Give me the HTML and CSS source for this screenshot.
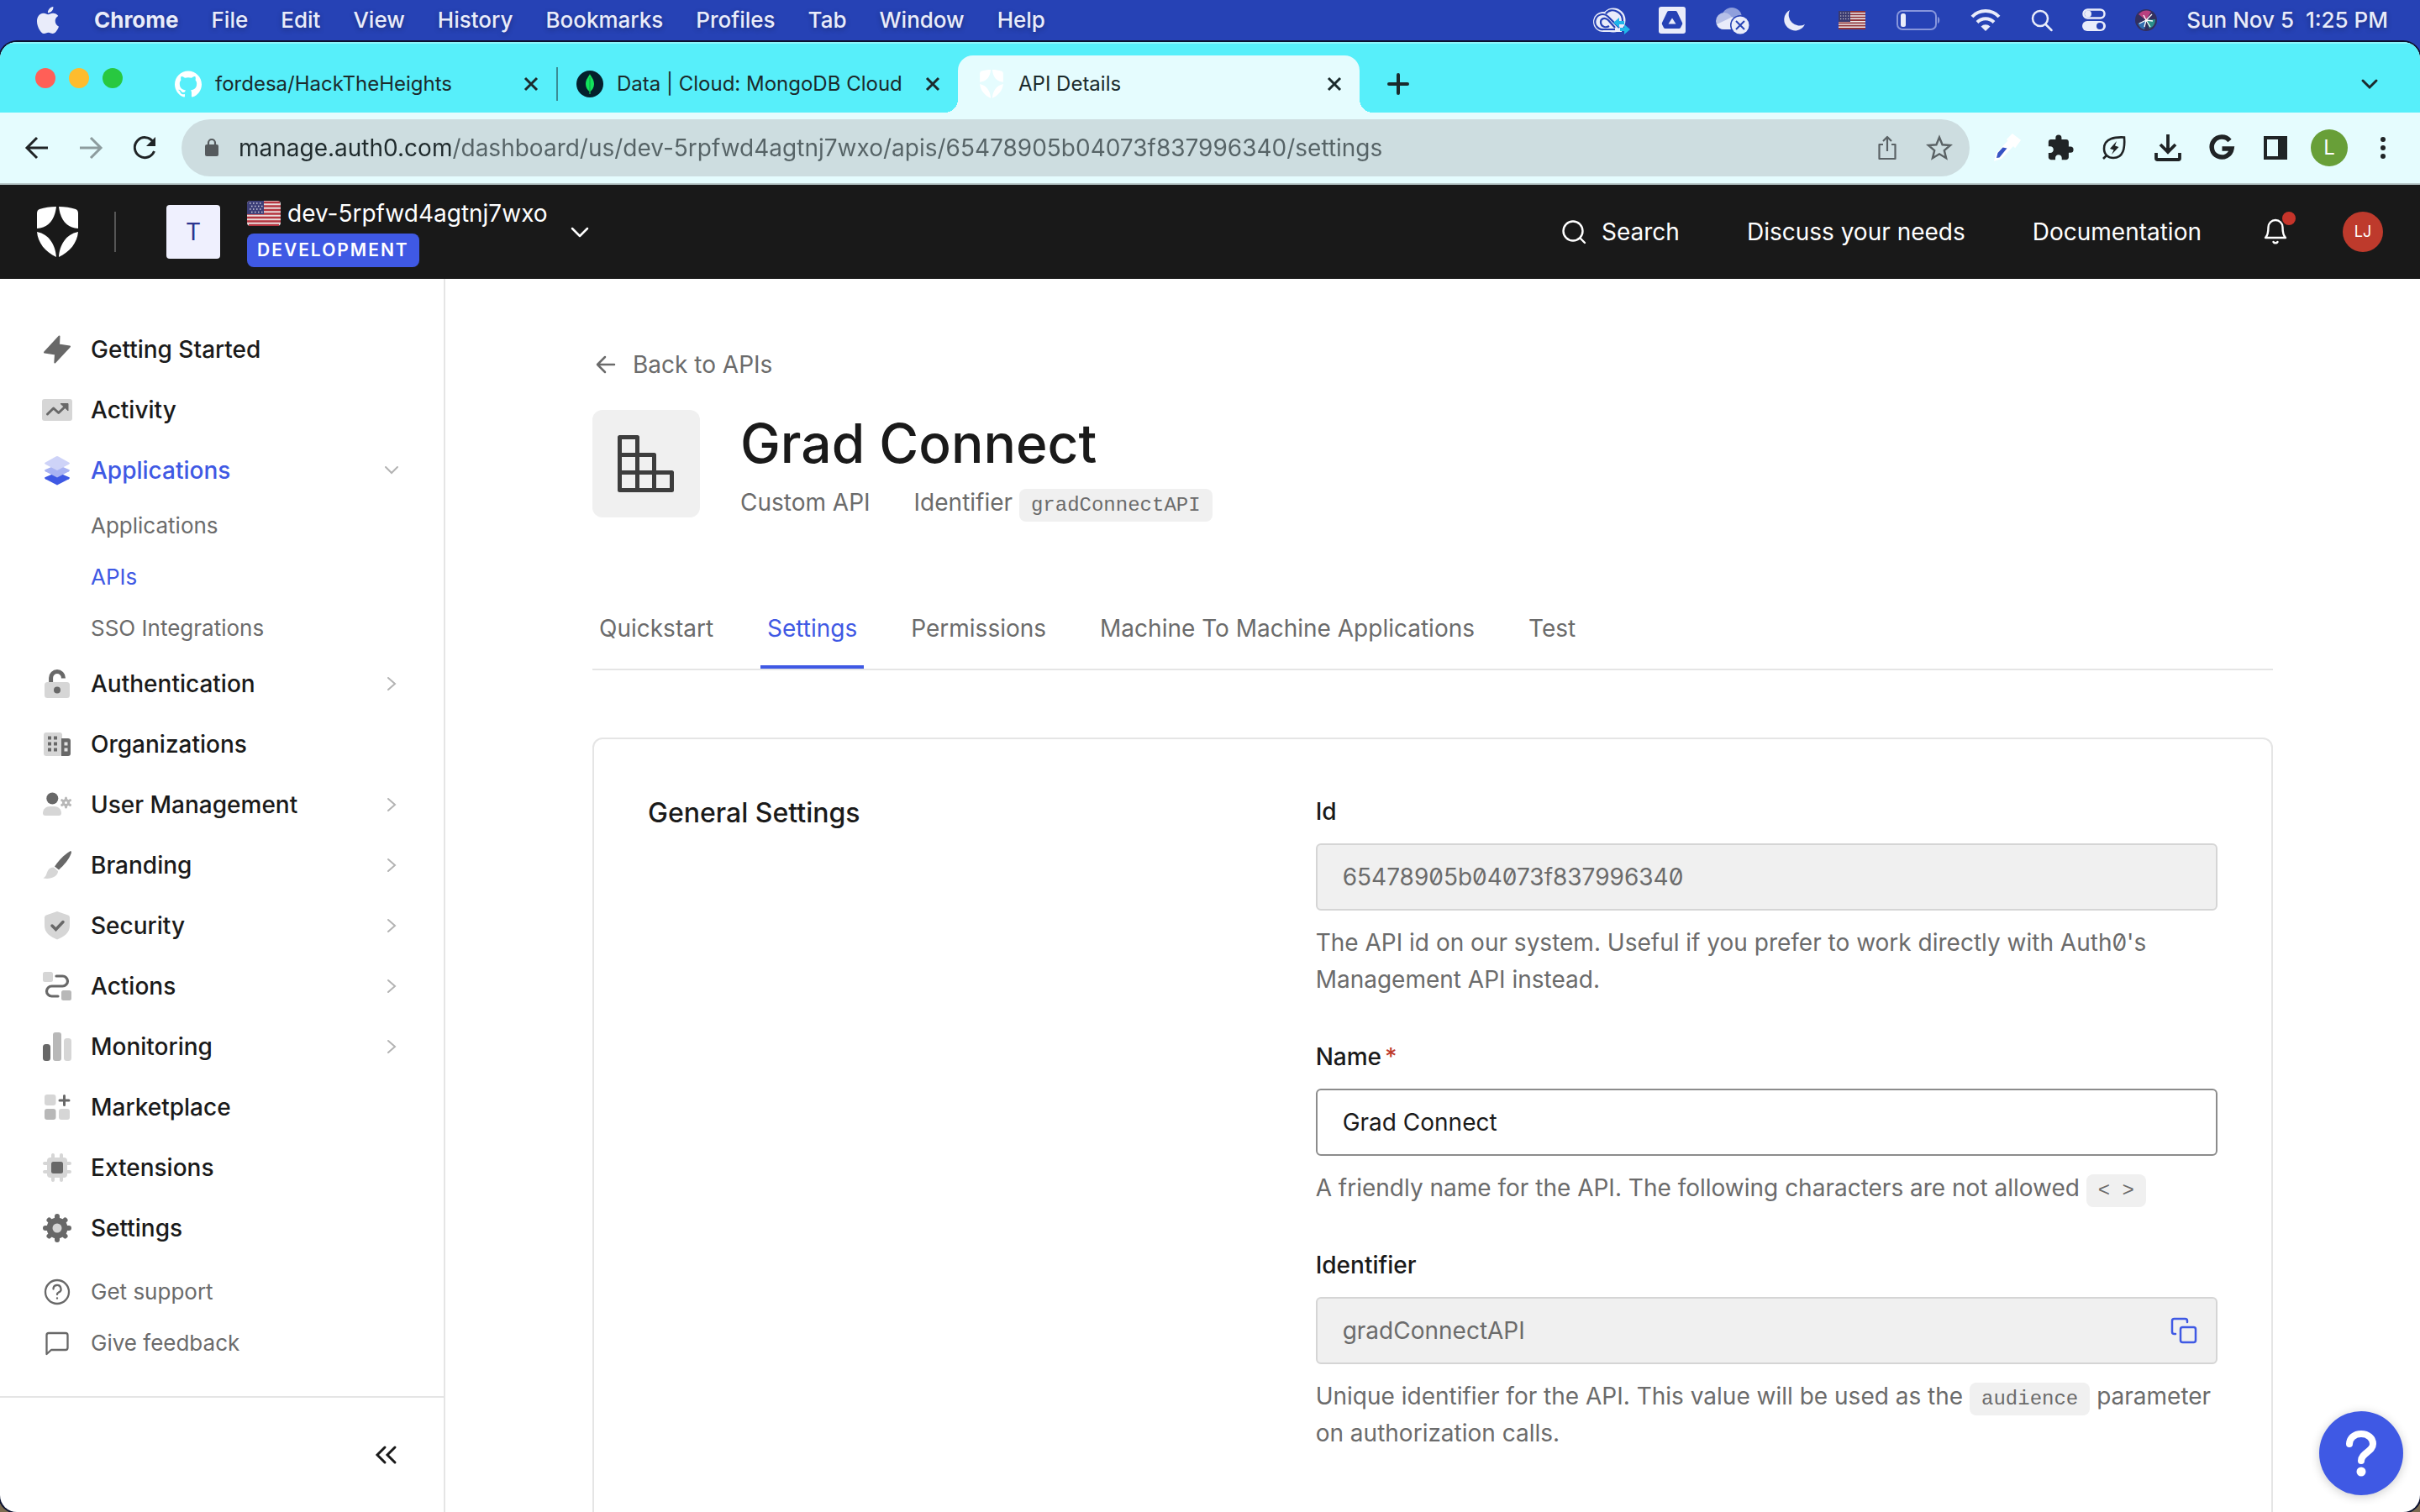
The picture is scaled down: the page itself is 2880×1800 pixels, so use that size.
FILE: index.html
```html
<!DOCTYPE html>
<html lang="en">
<head>
<meta charset="UTF-8">
<meta name="viewport" content="width=device-width, initial-scale=1.0">
<title>API Details</title>
<link rel="stylesheet" href="styles.css">
</head>
<body>

<!-- system menu bar -->
<div class="menubar">
  <div class="menubar-left">
    <svg class="apple" width="32" height="32" viewBox="0 0 24 24" fill="currentColor"><path d="M12.152 6.896c-.948 0-2.415-1.078-3.96-1.04-2.04.027-3.91 1.183-4.961 3.014-2.117 3.675-.546 9.103 1.519 12.09 1.013 1.454 2.208 3.09 3.792 3.039 1.52-.065 2.09-.987 3.935-.987 1.831 0 2.35.987 3.96.948 1.637-.026 2.676-1.48 3.676-2.948 1.156-1.688 1.636-3.325 1.662-3.415-.039-.013-3.182-1.221-3.22-4.857-.026-3.04 2.48-4.494 2.597-4.559-1.429-2.09-3.623-2.324-4.39-2.376-2-.156-3.675 1.09-4.61 1.09zM15.53 3.83c.843-1.012 1.4-2.427 1.245-3.83-1.207.052-2.662.805-3.532 1.818-.78.896-1.454 2.338-1.273 3.714 1.338.104 2.715-.688 3.559-1.701"/></svg>
    <span class="app-name">Chrome</span>
    <span>File</span>
    <span>Edit</span>
    <span>View</span>
    <span>History</span>
    <span>Bookmarks</span>
    <span>Profiles</span>
    <span>Tab</span>
    <span>Window</span>
    <span>Help</span>
  </div>
  <div class="menubar-right">
    <svg width="44" height="34" viewBox="0 0 44 34"><circle cx="24" cy="17" r="14.500" fill="currentColor"/><circle cx="12" cy="19" r="12" fill="currentColor"/><path d="M12 19h22v12H12z" fill="currentColor"/><g fill="none" stroke="#2642b5" stroke-width="2.200"><path d="M15 9.500C18 5 24 4 29 7c4 2 6 6 6 11"/><path d="M26 28H12a9 9 0 1 1 5.500-15.500L31 26"/><path d="M19 24c-3 2-9 2-10-4-.5-5 5-7 9-3l8 9"/></g><path d="M24 20l7-6v4h6v4h-6v4z" fill="#1fb6ea"/><path d="M44 28l-7-6v4h-5v4h5v4z" fill="#1fb6ea"/></svg>
    <svg width="32" height="32" viewBox="0 0 32 32"><rect width="32" height="32" rx="3" fill="currentColor"/><path d="M12 5h8q1.200 0 1.800 1L28 19q.5 1 0 2l-2 4q-.6 1-1.800 1H7.800Q6.600 26 6 25l-2-4q-.5-1 0-2l6.200-13Q10.800 5 12 5z" fill="#2642b5"/><path d="M16 13.500l4.500 7h-9z" fill="currentColor"/></svg>
    <svg width="44" height="34" viewBox="0 0 44 34"><circle cx="21" cy="14" r="12" fill="#8f9fdc"/><circle cx="12" cy="18" r="10" fill="#b6c0e7"/><path d="M3 22l19-9 6 15H12q-7 0-9-6z" fill="currentColor"/><circle cx="31" cy="23" r="12" fill="#2642b5"/><circle cx="31" cy="23" r="10.500" fill="currentColor"/><path d="M26 18l10 10M36 18L26 28" stroke="#2642b5" stroke-width="2"/></svg>
    <svg width="34" height="30" viewBox="0 0 34 30"><path d="M12 3a13 13 0 1 0 18 17A13 13 0 0 1 12 3z" fill="currentColor"/></svg>
    <svg width="36" height="24" viewBox="0 0 36 24"><rect x="2" y="1" width="32" height="22" fill="#eee"/><path d="M2 2h32M2 5.300h32M2 8.700h32M2 12h32M2 15.300h32M2 18.700h32M2 22h32" stroke="#8f3238" stroke-width="1.800"/><rect x="2" y="1" width="14" height="13" fill="#3a3a70"/><path d="M4 3.500h11M4 7h11M4 10.500h11" stroke="#ddd" stroke-width="1.200" stroke-dasharray="1.300 1.700"/></svg>
    <svg width="54" height="26" viewBox="0 0 54 26" fill="none"><rect x="2" y="2" width="46" height="22" rx="6" stroke="#8796dc" stroke-width="2"/><rect x="6" y="5" width="6" height="16" rx="2.500" fill="currentColor"/><path d="M50 9c3 1 3 7 0 8z" fill="#8796dc"/></svg>
    <svg width="38" height="28" viewBox="0 0 38 28" fill="none" stroke="currentColor" stroke-width="4"><path d="M3 10a22 22 0 0 1 32 0M9 16.500a14 14 0 0 1 20 0"/><path d="M13.500 21.500a8 8 0 0 1 11 0L19 27z" fill="currentColor" stroke="none"/></svg>
    <svg width="28" height="28" viewBox="0 0 28 28" fill="none" stroke="currentColor" stroke-width="2.500"><circle cx="12" cy="12" r="9"/><path d="M18.500 19l7 7" stroke-linecap="round"/></svg>
    <svg width="28" height="28" viewBox="0 0 28 28"><rect x="1.500" y="1.500" width="25" height="10" rx="5" fill="none" stroke="currentColor" stroke-width="2.500"/><circle cx="7" cy="6.500" r="4" fill="currentColor"/><rect y="15" width="28" height="12" rx="6" fill="currentColor"/><circle cx="21" cy="21" r="4" fill="#2642b5"/></svg>
    <svg width="28" height="28" viewBox="0 0 28 28"><circle cx="14" cy="14" r="13" fill="#32305e"/><path d="M14 14L5 7q7-7 15-3z" fill="#b8407f"/><path d="M14 14l-10 4q3 6 8 7z" fill="#2f6fb0"/><path d="M14 14l11-1q0 8-7 11z" fill="#2a8f8a"/><path d="M14 14l-8 4M14 14l7-7M14 14l5 8M14 14l-2 8M14 14l-3-6M14 14l8 1" stroke="#fff" stroke-width="1.300"/></svg>
    <span class="clock">Sun Nov 5&nbsp; 1:25 PM</span>
  </div>
</div>

<div class="window">

  <!-- browser tabs -->
  <div class="tabstrip">
    <div class="lights">
      <span class="light red"></span>
      <span class="light yellow"></span>
      <span class="light green"></span>
    </div>
    <div class="tab">
      <svg width="32" height="32" viewBox="0 0 24 24" fill="#fff"><path d="M12 .297c-6.630 0-12 5.373-12 12 0 5.303 3.438 9.800 8.205 11.385.6.113.82-.258.82-.577 0-.285-.01-1.040-.015-2.040-3.338.724-4.042-1.610-4.042-1.610C4.422 18.070 3.633 17.700 3.633 17.700c-1.087-.744.084-.729.084-.729 1.205.084 1.838 1.236 1.838 1.236 1.070 1.835 2.809 1.305 3.495.998.108-.776.417-1.305.76-1.605-2.665-.3-5.466-1.332-5.466-5.930 0-1.310.465-2.380 1.235-3.220-.135-.303-.54-1.523.105-3.176 0 0 1.005-.322 3.300 1.230.96-.267 1.980-.399 3-.405 1.020.006 2.040.138 3 .405 2.280-1.552 3.285-1.230 3.285-1.230.645 1.653.24 2.873.12 3.176.765.84 1.230 1.910 1.230 3.220 0 4.610-2.805 5.625-5.475 5.920.42.36.81 1.096.81 2.220 0 1.606-.015 2.896-.015 3.286 0 .315.21.69.825.57C20.565 22.092 24 17.592 24 12.297c0-6.627-5.373-12-12-12"/></svg>
      <span class="tab-title">fordesa/HackTheHeights</span>
      <button class="tab-close" aria-label="Close tab"><svg width="20" height="20" viewBox="0 0 20 20"><path d="M3 3l14 14M17 3L3 17"/></svg></button>
    </div>
    <div class="tab divided">
      <svg width="32" height="32" viewBox="0 0 32 32"><circle cx="16" cy="16" r="16" fill="#04202c"/><path d="M16 4c1 3 5 6 5 12 0 4-2 7-4.500 9V28h-1v-3C13 23 11 20 11 16c0-6 4-9 5-12z" fill="#12e35c"/><path d="M16 8v17" stroke="#0aa345" stroke-width="1"/></svg>
      <span class="tab-title">Data | Cloud: MongoDB Cloud</span>
      <button class="tab-close" aria-label="Close tab"><svg width="20" height="20" viewBox="0 0 20 20"><path d="M3 3l14 14M17 3L3 17"/></svg></button>
    </div>
    <div class="tab active">
      <svg width="32" height="34" viewBox="-3 0 55 60" fill="#fff"><path d="M23 0C16 0 9 1 3 3Q0 4 0 8V26C13 25 21 17 23 0zM26 0C33 0 40 1 46 3Q49 4 49 8V26C36 25 28 17 26 0zM0 30C1 43 10 54 23 60 22 46 15 33 0 30zM49 30C48 43 39 54 26 60 27 46 34 33 49 30z"/></svg>
      <span class="tab-title">API Details</span>
      <button class="tab-close" aria-label="Close tab"><svg width="20" height="20" viewBox="0 0 20 20"><path d="M3 3l14 14M17 3L3 17"/></svg></button>
    </div>
    <button class="strip-btn new-tab" aria-label="New tab"><svg width="28" height="28" viewBox="0 0 28 28"><path d="M14 3v22M3 14h22" stroke-width="4"/></svg></button>
    <button class="strip-btn tab-search" aria-label="Search tabs"><svg width="28" height="28" viewBox="0 0 28 28"><path d="M6 10l8 8 8-8" stroke-width="3"/></svg></button>
  </div>

  <!-- address bar -->
  <div class="toolbar">
    <div class="toolbar-group">
      <button class="tool" aria-label="Back"><svg width="32" height="32" viewBox="0 0 32 32"><path d="M29 16H4M16 4L4 16l12 12"/></svg></button>
      <button class="tool disabled" aria-label="Forward"><svg width="32" height="32" viewBox="0 0 32 32"><path d="M3 16h25M16 4l12 12-12 12"/></svg></button>
      <button class="tool" aria-label="Reload"><svg width="32" height="32" viewBox="0 0 32 32"><path d="M26 8.500A12 12 0 1 0 27.500 20"/><path d="M29 3v11H18z" fill="currentColor" stroke="none"/></svg></button>
    </div>
    <div class="omnibox">
      <svg class="lock" width="28" height="24" viewBox="0 0 28 24"><rect x="6" y="8" width="16" height="14" rx="2" fill="#555a5d"/><path d="M10 9V6a4 4 0 0 1 8 0v3" fill="none" stroke="#555a5d" stroke-width="2.200"/></svg>
      <input class="url" type="text" aria-label="Address" value="manage.auth0.com/dashboard/us/dev-5rpfwd4agtnj7wxo/apis/65478905b04073f837996340/settings">
      <button class="tool muted" aria-label="Share"><svg width="32" height="32" viewBox="0 0 32 32"><path d="M11 12H6.500v17h19V12H21M16 20V3M11 8l5-5 5 5" stroke-width="2.200" stroke-linejoin="round"/></svg></button>
      <button class="tool muted" aria-label="Bookmark"><svg width="32" height="32" viewBox="0 0 32 32"><path d="M16 3.500l3.600 8.800 9.400.7-7.200 6.100 2.300 9.200L16 23.300l-8.100 5 2.300-9.200L3 13l9.400-.7z" stroke-width="2.400"/></svg></button>
    </div>
    <div class="toolbar-group">
      <button class="tool" aria-label="Color picker"><svg width="36" height="36" viewBox="0 0 36 36"><path d="M3 34l2-9L20 9l7 6-15 16z" fill="#fff" stroke="none"/><path d="M20 8l5-5 8 6-5 7z" fill="#fff" stroke="#fff"/><path d="M6 30l1.500-6 6-6.500 5 1-9 11z" fill="#3653c4" stroke="none"/></svg></button>
      <button class="tool" aria-label="Extensions"><svg width="34" height="34" viewBox="0 0 24 24"><path d="M20.500 11H19V7c0-1.100-.9-2-2-2h-4V3.500a2.500 2.500 0 0 0-5 0V5H4c-1.100 0-1.990.9-1.990 2v3.800H3.500c1.490 0 2.700 1.210 2.700 2.700s-1.210 2.700-2.700 2.700H2V20c0 1.100.9 2 2 2h3.800v-1.500c0-1.490 1.210-2.700 2.700-2.700 1.490 0 2.700 1.210 2.700 2.700V22H17c1.100 0 2-.9 2-2v-4h1.500a2.500 2.500 0 0 0 0-5z" fill="currentColor" stroke="none"/></svg></button>
      <button class="tool" aria-label="Energy saver"><svg width="32" height="32" viewBox="0 0 32 32"><path d="M28 3.500C18 3 4 4 4 17c0 7 5 11 11 11 12 0 14-12 13-24.500zM7 25l-4 4" stroke-width="2.600"/><path d="M19 8l-8 9 4.500 1.500L13 24l8.500-9-4.500-1.500z" fill="currentColor" stroke="none"/></svg></button>
      <button class="tool" aria-label="Downloads"><svg width="34" height="34" viewBox="0 0 34 34"><path d="M17 1v21M8 13l9 9 9-9M3 23v6.500q0 1.500 1.500 1.500h25q1.500 0 1.500-1.500V23" stroke-width="3.800"/></svg></button>
      <button class="tool" aria-label="Google"><svg width="34" height="34" viewBox="0 0 34 34"><path d="M26.500 8.500A12 12 0 1 0 29 18H17.500" stroke-width="5.500"/></svg></button>
      <button class="tool" aria-label="Side panel"><svg width="32" height="32" viewBox="0 0 32 32"><rect x="4" y="4" width="24" height="24" stroke-width="4"/><path d="M19 3h10v26H19z" fill="currentColor" stroke="none"/></svg></button>
      <button class="profile" aria-label="Profile">L</button>
      <button class="tool" aria-label="Menu"><svg width="32" height="32" viewBox="0 0 32 32"><g fill="currentColor" stroke="none"><circle cx="16" cy="6" r="3"/><circle cx="16" cy="16" r="3"/><circle cx="16" cy="26" r="3"/></g></svg></button>
    </div>
  </div>

  <!-- dashboard header -->
  <header class="header">
    <a class="logo" href="#" aria-label="Home"><svg width="49" height="60" viewBox="0 0 49 60" fill="#fff"><path d="M23 0C16 0 9 1 3 3Q0 4 0 8V26C13 25 21 17 23 0zM26 0C33 0 40 1 46 3Q49 4 49 8V26C36 25 28 17 26 0zM0 30C1 43 10 54 23 60 22 46 15 33 0 30zM49 30C48 43 39 54 26 60 27 46 34 33 49 30z"/></svg></a>
    <button class="tenant">
      <span class="tenant-letter">T</span>
      <span class="tenant-info">
        <span class="tenant-name">
          <svg width="40" height="30" viewBox="0 0 40 30"><rect width="40" height="30" rx="4" fill="#e8dcdc"/><path d="M1 2h38M0 6.500h40M0 11h40M0 15.500h40M0 20h40M0 24.500h40M2 29h36" stroke="#b5343f" stroke-width="2.300"/><path d="M4 0h16v16H0V4q0-4 4-4z" fill="#3d3f78"/><path d="M3 3h16M5 6.500h14M3 10h16M5 13.500h14" stroke="#ccd" stroke-width="1.500" stroke-dasharray="1.500 2.500"/></svg>
          dev-5rpfwd4agtnj7wxo
        </span>
        <span class="env">DEVELOPMENT</span>
      </span>
      <svg width="24" height="24" viewBox="0 0 24 24" fill="none" stroke="#fff" stroke-width="2.500" stroke-linecap="round" stroke-linejoin="round"><path d="M3 8l9 9 9-9"/></svg>
    </button>
    <nav class="header-links">
      <a href="#"><svg width="30" height="30" viewBox="0 0 30 30" fill="none" stroke="#fff" stroke-width="2.400" stroke-linecap="round"><circle cx="14" cy="14" r="11.500"/><path d="M22.500 22.500L28 28"/></svg>Search</a>
      <a href="#">Discuss your needs</a>
      <a href="#">Documentation</a>
    </nav>
    <button class="bell" aria-label="Notifications">
      <svg width="36" height="36" viewBox="0 0 36 36" fill="none" stroke="#fff" stroke-width="2.400" stroke-linecap="round" stroke-linejoin="round"><path d="M18 4a8.500 8.500 0 0 0-8.500 8.500c0 8-1.500 10.500-3.500 12.500h24c-2-2-3.500-4.500-3.500-12.500A8.500 8.500 0 0 0 18 4zM15.500 30a3 3 0 0 0 5 0"/></svg>
      <span class="bell-dot"></span>
    </button>
    <button class="avatar" aria-label="Account">LJ</button>
  </header>

  <div class="page">
    <aside class="sidebar">
      <nav class="nav">
        <a class="nav-item" href="#"><svg width="36" height="36" viewBox="0 0 36 36"><path d="M20.500 2.500L3 21.500l13 2-.7 10L33 14.500l-13-2z" fill="#686868" stroke="#686868" stroke-width="2" stroke-linejoin="round"/></svg>Getting Started</a>
        <a class="nav-item" href="#"><svg width="36" height="36" viewBox="0 0 36 36"><rect y="5" width="36" height="26" rx="3" fill="#d6d6d6"/><path d="M6.500 23l7.200-7 6 5.500L27.500 14" fill="none" stroke="#686868" stroke-width="3" stroke-linejoin="round" stroke-linecap="round"/><path d="M22 10.500h9V19z" fill="#686868" stroke="#686868" stroke-linejoin="round"/></svg>Activity</a>
        <a class="nav-item current" href="#"><svg width="36" height="36" viewBox="0 0 36 36"><path d="M4 26l14-6 14 6q2 1 0 2.200L18 35.500 4 28.200Q2 27 4 26z" fill="#3f59e4"/><path d="M4 17l14-6 14 6q2 1 0 2.200L18 26.500 4 19.200Q2 18 4 17z" fill="#a9b3f3"/><path d="M4 8.500L16.500 1.500q1.500-.8 3 0L32 8.500q2 1 0 2.200L18 18 4 10.700Q2 9.500 4 8.500z" fill="#ced3f8"/></svg>Applications<svg class="chev" width="24" height="24" viewBox="0 0 24 24"><path d="M5 8l7 7 7-7"/></svg></a>
        <div class="subnav">
          <a href="#">Applications</a>
          <a class="current" href="#">APIs</a>
          <a href="#">SSO Integrations</a>
        </div>
        <a class="nav-item" href="#"><svg width="36" height="36" viewBox="0 0 36 36"><rect x="3" y="16" width="30" height="19" rx="3.500" fill="#d6d6d6"/><circle cx="18" cy="25.500" r="4" fill="#686868"/><path d="M10.600 16v-5a7.400 7.400 0 0 1 14.800 0v.5" fill="none" stroke="#686868" stroke-width="5"/></svg>Authentication<svg class="chev" width="24" height="24" viewBox="0 0 24 24"><path d="M8 5l8 7-8 7"/></svg></a>
        <a class="nav-item" href="#"><svg width="36" height="36" viewBox="0 0 36 36"><rect x="2" y="4" width="22" height="28" rx="3" fill="#d6d6d6"/><path d="M23 11h8q3 0 3 3v15q0 3-3 3h-8z" fill="#686868"/><path d="M9 8.500v18M16 8.500v18" stroke="#686868" stroke-width="4" stroke-dasharray="4 3"/><path d="M28.500 15.500v11" stroke="#e2e2e2" stroke-width="4" stroke-dasharray="4 3"/></svg>Organizations</a>
        <a class="nav-item" href="#"><svg width="36" height="36" viewBox="0 0 36 36"><circle cx="12.300" cy="10.500" r="7" fill="#686868"/><path d="M1 28c0-5 4-8 8-8h6c4 0 8 3 8 8q0 3-3 3H4q-3 0-3-3z" fill="#d6d6d6"/><g stroke="#b8b8b8" stroke-width="3" stroke-linecap="round" fill="none"><circle cx="28.500" cy="15.500" r="3"/><path d="M28.500 10v1M28.500 20v1M23.700 12.700l1 .6M32.500 17.800l1 .6M23.700 18.400l1-.6M32.500 13.300l1-.6"/></g></svg>User Management<svg class="chev" width="24" height="24" viewBox="0 0 24 24"><path d="M8 5l8 7-8 7"/></svg></a>
        <a class="nav-item" href="#"><svg width="36" height="36" viewBox="0 0 36 36"><path d="M34 1q1.500.5.500 3.500C32 11 26 18 20 23.500L15 19.500C20 12 27 5 34 1z" fill="#686868"/><path d="M14 20.500l5 4.500c0 7-9 10-17.500 8.500C5.500 31 5 28 7 24.500c1.500-3 4-4 7-4z" fill="#d6d6d6"/></svg>Branding<svg class="chev" width="24" height="24" viewBox="0 0 24 24"><path d="M8 5l8 7-8 7"/></svg></a>
        <a class="nav-item" href="#"><svg width="36" height="36" viewBox="0 0 36 36"><path d="M18 1l13 4.500q2 .7 2 3V18c0 8-6 13-15 16.500C9 31 3 26 3 18V8.500q0-2.300 2-3z" fill="#d6d6d6"/><path d="M12 18l4.500 4.500L25 13.500" fill="none" stroke="#686868" stroke-width="3.500" stroke-linecap="round"/></svg>Security<svg class="chev" width="24" height="24" viewBox="0 0 24 24"><path d="M8 5l8 7-8 7"/></svg></a>
        <a class="nav-item" href="#"><svg width="36" height="36" viewBox="0 0 36 36"><rect x="1" y="1" width="12" height="12" rx="2.500" fill="#d6d6d6"/><rect x="23" y="23" width="12" height="12" rx="2.500" fill="#b8b8b8"/><path d="M17 6h7.500a6 6 0 0 1 0 12H11.500a6 6 0 0 0 0 12H19" fill="none" stroke="#686868" stroke-width="3.200" stroke-linecap="round"/></svg>Actions<svg class="chev" width="24" height="24" viewBox="0 0 24 24"><path d="M8 5l8 7-8 7"/></svg></a>
        <a class="nav-item" href="#"><svg width="36" height="36" viewBox="0 0 36 36"><rect x="1" y="15" width="9" height="20" rx="3.500" fill="#686868"/><rect x="13" y="1" width="10" height="34" rx="3" fill="#b8b8b8"/><rect x="26" y="8" width="9" height="27" rx="3.500" fill="#d6d6d6"/></svg>Monitoring<svg class="chev" width="24" height="24" viewBox="0 0 24 24"><path d="M8 5l8 7-8 7"/></svg></a>
        <a class="nav-item" href="#"><svg width="36" height="36" viewBox="0 0 36 36"><rect x="3" y="3" width="13.500" height="13" rx="3" fill="#d6d6d6"/><rect x="3" y="20" width="13.500" height="13" rx="3" fill="#b8b8b8"/><rect x="20" y="20" width="13" height="13" rx="3" fill="#d6d6d6"/><path d="M26.500 4.500v11M21 10h11" stroke="#686868" stroke-width="3" stroke-linecap="round"/></svg>Marketplace</a>
        <a class="nav-item" href="#"><svg width="36" height="36" viewBox="0 0 36 36"><rect x="6" y="6" width="24" height="24" rx="4" fill="#d6d6d6"/><path d="M13 3v30M23 3v30M3 13h30M3 23h30" stroke="#d6d6d6" stroke-width="4" stroke-linecap="round"/><rect x="11" y="11" width="14" height="14" rx="2.500" fill="#686868"/></svg>Extensions</a>
        <a class="nav-item" href="#"><svg width="36" height="36" viewBox="0 0 36 36"><circle cx="18" cy="18" r="12.500" fill="#686868"/><path d="M18 4v28M4 18h28M8.500 8.500l19 19M27.500 8.500l-19 19" stroke="#686868" stroke-width="6" stroke-linecap="round"/><circle cx="18" cy="18" r="5.500" fill="#d6d6d6"/></svg>Settings</a>
        <div class="nav-extra">
          <a href="#"><svg width="36" height="36" viewBox="0 0 36 36" fill="none" stroke="#686868" stroke-width="2.300" stroke-linecap="round"><circle cx="18" cy="18" r="14"/><path d="M13.500 14.500a4.500 4.500 0 1 1 6 4.200q-1.500.6-1.500 2.300M18 25.500v.2"/></svg>Get support</a>
          <a href="#"><svg width="36" height="36" viewBox="0 0 36 36" fill="none" stroke="#686868" stroke-width="2.300" stroke-linejoin="round"><path d="M8 6h20q2.500 0 2.500 2.500v15q0 2.500-2.500 2.500H11l-5.500 5V8.500Q5.500 6 8 6z"/></svg>Give feedback</a>
        </div>
      </nav>
      <div class="sidebar-footer">
        <button class="collapse" aria-label="Collapse sidebar"><svg width="28" height="28" viewBox="0 0 28 28"><path d="M12 5l-9 9 9 9M24 5l-9 9 9 9"/></svg></button>
      </div>
    </aside>

    <main class="main">
      <div class="content">
        <a class="back" href="#"><svg width="32" height="32" viewBox="0 0 32 32"><path d="M26 16H6M15 7l-9 9 9 9"/></svg>Back to APIs</a>

        <div class="api-header">
          <div class="api-icon"><svg width="72" height="72" viewBox="0 0 72 72" fill="none" stroke="#3d3d3d" stroke-width="5" stroke-linejoin="round"><path d="M4.500 4.500h21v63h-21zM25.500 25.500h20v42M4.500 25.500h21M4.500 46.500h62v21h-62z"/></svg></div>
          <div>
            <h1>Grad Connect</h1>
            <div class="api-meta">
              <span>Custom API</span>
              <span>Identifier <code>gradConnectAPI</code></span>
            </div>
          </div>
        </div>

        <nav class="tabs">
          <a href="#">Quickstart</a>
          <a class="current" href="#">Settings</a>
          <a href="#">Permissions</a>
          <a href="#">Machine To Machine Applications</a>
          <a href="#">Test</a>
        </nav>

        <section class="card">
          <h2>General Settings</h2>
          <form class="fields">
            <div class="field">
              <label for="api-id">Id</label>
              <input id="api-id" type="text" value="65478905b04073f837996340" disabled>
              <p>The API id on our system. Useful if you prefer to work directly with Auth0's Management API instead.</p>
            </div>
            <div class="field">
              <label for="api-name">Name<span class="required">*</span></label>
              <input id="api-name" type="text" value="Grad Connect">
              <p>A friendly name for the API. The following characters are not allowed <code>&lt; &gt;</code></p>
            </div>
            <div class="field">
              <label for="api-identifier">Identifier</label>
              <div class="input-wrap">
                <input id="api-identifier" type="text" value="gradConnectAPI" disabled>
                <button class="copy" type="button" aria-label="Copy"><svg width="32" height="32" viewBox="0 0 32 32"><rect x="12" y="12" width="18" height="18" rx="2.500"/><path d="M6 20H4.500Q2 20 2 17.500v-13Q2 2 4.500 2h13Q20 2 20 4.500V6"/></svg></button>
              </div>
              <p>Unique identifier for the API. This value will be used as the <code>audience</code> parameter on authorization calls.</p>
            </div>
          </form>
        </section>
      </div>
    </main>
  </div>

  <button class="help" aria-label="Help"><svg width="60" height="60" viewBox="0 0 60 60"><path d="M16 19c0-7 6-12 14-12s14 5 14 12c0 9-14 11-14 20" fill="none" stroke="#fff" stroke-width="8" stroke-linecap="round"/><circle cx="30" cy="52" r="5.500" fill="#fff"/></svg></button>
</div>

</body>
</html>
```
FILE: styles.css
```css
* {
  box-sizing: border-box;
}
body {
  margin: 0;
  height: 100vh;
  display: flex;
  flex-direction: column;
  overflow: hidden;
  background: linear-gradient(#2642b5 50%, #7b6b50 50%);
  font-family: Inter, "Liberation Sans", sans-serif;
  font-size: 28px;
  line-height: 44px;
  color: #1a1a1a;
}
a {
  color: inherit;
  text-decoration: none;
}
button {
  display: flex;
  align-items: center;
  justify-content: center;
  padding: 0;
  border: 0;
  background: none;
  font: inherit;
  color: inherit;
}
svg {
  flex: none;
  display: block;
}

/* menu bar */
.menubar {
  flex: none;
  display: flex;
  align-items: center;
  justify-content: space-between;
  height: 48px;
  padding: 0 38px 0 41px;
  background: #2642b5;
  color: #e9ecfa;
  font-size: 26px;
  font-weight: 500;
  white-space: nowrap;
  text-shadow: 0 2px 6px rgba(0, 0, 0, 0.3);
}
.menubar-left {
  display: flex;
  align-items: center;
  gap: 39px;
}
.menubar-right {
  display: flex;
  align-items: center;
  gap: 34px;
}
.app-name {
  font-weight: 700;
}

/* browser window */
.window {
  flex: 1;
  min-height: 0;
  display: flex;
  flex-direction: column;
  position: relative;
  margin-top: 2px;
  border-radius: 20px;
  overflow: hidden;
  background: #fff;
  box-shadow: 0 0 0 2px #0b1230;
}
.tabstrip {
  flex: none;
  display: flex;
  align-items: center;
  height: 84px;
  padding: 14px 36px 0 42px;
  background: #57effa;
  border-top: 2px solid #8df5fc;
  color: #1b2a2c;
  font-size: 24px;
}
.lights {
  display: flex;
  gap: 16px;
  margin-right: 38px;
  padding-bottom: 14px;
}
.light {
  width: 24px;
  height: 24px;
  border-radius: 50%;
}
.red {
  background: #ff5f57;
}
.yellow {
  background: #febc2e;
}
.green {
  background: #28c840;
}
.tab {
  position: relative;
  display: flex;
  align-items: center;
  gap: 16px;
  width: 478px;
  height: 100%;
  padding: 0 20px 0 24px;
}
.tab-title {
  flex: 1;
  white-space: nowrap;
}
.tab-close svg {
  fill: none;
  stroke: #1b2a2c;
  stroke-width: 3;
}
.divided::before {
  content: "";
  position: absolute;
  left: 0;
  top: 14px;
  width: 2px;
  height: 40px;
  background: #3a8c95;
}
.active {
  border-radius: 18px 18px 0 0;
  background: #e5fcfe;
}
/* flared feet of the active tab */
.active::before,
.active::after {
  content: "";
  position: absolute;
  bottom: 0;
  width: 16px;
  height: 16px;
}
.active::before {
  left: -16px;
  background: radial-gradient(circle at 0 0, #57effa 16px, #e5fcfe 16px);
}
.active::after {
  right: -16px;
  background: radial-gradient(circle at 100% 0, #57effa 16px, #e5fcfe 16px);
}
.strip-btn svg {
  fill: none;
  stroke: #1b2a2c;
  stroke-linecap: round;
}
.new-tab {
  margin-left: 32px;
}
.tab-search {
  margin-left: auto;
  margin-right: 10px;
}

.toolbar {
  flex: none;
  display: flex;
  align-items: center;
  gap: 22px;
  height: 86px;
  padding: 0 22px;
  background: #e5fcfe;
  border-bottom: 2px solid #b9c9ca;
}
.toolbar-group {
  display: flex;
  align-items: center;
  gap: 20px;
}
.tool {
  width: 44px;
  height: 44px;
  color: #202426;
}
.tool svg {
  fill: none;
  stroke: currentColor;
  stroke-width: 3;
}
.disabled {
  color: #8d9c9e;
}
.muted {
  color: #5a6265;
}
.omnibox {
  flex: 1;
  display: flex;
  align-items: center;
  gap: 18px;
  height: 68px;
  padding: 0 14px 0 22px;
  border-radius: 34px;
  background: #cddde0;
}
/* host part is darker than the path */
.url {
  flex: 1;
  min-width: 0;
  padding: 0;
  border: 0;
  font: inherit;
  color: transparent;
  background: linear-gradient(90deg, #1f2a2c 253px, #566366 253px);
  -webkit-background-clip: text;
  background-clip: text;
}
.profile {
  width: 44px;
  height: 44px;
  border-radius: 50%;
  background: #689f38;
  color: #fff;
  font-size: 24px;
}

/* dashboard header */
.header {
  flex: none;
  display: flex;
  align-items: center;
  height: 112px;
  padding: 0 44px;
  background: #191919;
  color: #fff;
}
.logo {
  display: flex;
  align-items: center;
  height: 48px;
  padding-right: 43px;
  border-right: 2px solid #555;
}
.tenant {
  gap: 26px;
  margin-left: 60px;
}
.tenant-letter {
  width: 64px;
  height: 64px;
  margin-right: 6px;
  border-radius: 4px;
  background: #eff0fe;
  color: #2c348f;
  line-height: 64px;
}
.tenant-info {
  display: flex;
  flex-direction: column;
  align-items: flex-start;
  gap: 4px;
}
.tenant-name {
  display: flex;
  align-items: center;
  gap: 8px;
  line-height: 40px;
}
.env {
  padding: 0 12px;
  border-radius: 8px;
  background: #3f59e4;
  font-size: 21px;
  font-weight: 600;
  line-height: 40px;
  letter-spacing: 2px;
}
.header-links {
  display: flex;
  gap: 80px;
  margin-left: auto;
  margin-right: 70px;
}
.header-links a {
  display: flex;
  align-items: center;
  gap: 18px;
}
.bell {
  position: relative;
  margin-right: 62px;
}
.bell-dot {
  position: absolute;
  top: -6px;
  right: -6px;
  width: 16px;
  height: 16px;
  border-radius: 50%;
  background: #c6342a;
}
.avatar {
  width: 48px;
  height: 48px;
  border-radius: 50%;
  background: #be3a2c;
  font-size: 18px;
}

/* sidebar */
.page {
  flex: 1;
  min-height: 0;
  display: flex;
}
.sidebar {
  flex: none;
  display: flex;
  flex-direction: column;
  width: 530px;
  border-right: 2px solid #e5e5e5;
}
.nav {
  flex: 1;
  padding: 48px 50px 0;
}
.nav-item {
  display: flex;
  align-items: center;
  gap: 22px;
  height: 72px;
  font-weight: 500;
}
.chev {
  margin-left: auto;
  fill: none;
  stroke: #b3b3b3;
  stroke-width: 2;
  stroke-linecap: round;
}
.current {
  color: #3f59e4;
}
.subnav,
.nav-extra {
  display: flex;
  flex-direction: column;
  gap: 1px;
  color: #6b6b6b;
  font-size: 26px;
  line-height: 60px;
}
.subnav {
  padding-left: 58px;
}
.nav-extra {
  padding-top: 10px;
}
.nav-extra a {
  display: flex;
  align-items: center;
  gap: 22px;
}
.sidebar-footer {
  display: flex;
  align-items: center;
  justify-content: flex-end;
  height: 138px;
  padding: 0 54px;
  border-top: 2px solid #e5e5e5;
}
.collapse svg {
  fill: none;
  stroke: #1a1a1a;
  stroke-width: 3;
  stroke-linecap: round;
}

/* page content */
.main {
  flex: 1;
  overflow: hidden;
  padding: 80px 60px 0;
}
.content {
  max-width: 2000px;
  margin: 0 auto;
}
.back {
  display: flex;
  align-items: center;
  gap: 16px;
  color: #6b6b6b;
}
.back svg {
  fill: none;
  stroke: #6b6b6b;
  stroke-width: 2.5;
  stroke-linecap: round;
  stroke-linejoin: round;
}
.api-header {
  display: flex;
  align-items: center;
  gap: 48px;
  margin: 30px 0 108px;
}
.api-icon {
  display: flex;
  align-items: center;
  justify-content: center;
  width: 128px;
  height: 128px;
  border-radius: 12px;
  background: #f0f0f0;
}
h1 {
  margin: 0 0 8px;
  font-size: 64px;
  font-weight: 500;
  line-height: 84px;
}
.api-meta {
  display: flex;
  gap: 52px;
  color: #6b6b6b;
  line-height: 40px;
}
/* line-height 1 keeps the chip from stretching its text line */
code {
  padding: 6px 14px;
  border-radius: 8px;
  background: #f0f0f0;
  font-family: "Liberation Mono", monospace;
  font-size: 24px;
  line-height: 1;
}
.tabs {
  display: flex;
  gap: 48px;
  border-bottom: 2px solid #e5e5e5;
  color: #6b6b6b;
}
.tabs a {
  padding: 0 8px 22px;
  border-bottom: 4px solid transparent;
}
.tabs .current {
  border-color: #3f59e4;
}

.card {
  display: grid;
  grid-template-columns: 5fr 7fr;
  gap: 28px;
  margin-top: 80px;
  padding: 64px 64px 160px;
  border: 2px solid #e5e5e5;
  border-radius: 12px;
}
h2 {
  margin: 0;
  font-size: 32px;
  font-weight: 500;
  line-height: 48px;
}
.fields {
  display: flex;
  flex-direction: column;
  gap: 48px;
  font-feature-settings: "zero";
}
.field {
  display: flex;
  flex-direction: column;
  gap: 16px;
}
.field label {
  font-weight: 500;
}
.required {
  margin-left: 4px;
  color: #be3a2c;
}
.field input {
  display: block;
  width: 100%;
  height: 80px;
  padding: 0 30px;
  border: 2px solid #8c8c8c;
  border-radius: 6px;
  background: #fff;
  font: inherit;
  font-feature-settings: inherit;
  color: #1a1a1a;
}
.field input:disabled {
  border-color: #d5d5d5;
  background: #f0f0f0;
  color: #6b6b6b;
}
.field p {
  margin: 0;
  color: #6b6b6b;
}
.input-wrap {
  position: relative;
}
.copy {
  position: absolute;
  top: 24px;
  right: 24px;
}
.copy svg {
  fill: none;
  stroke: #3f59e4;
  stroke-width: 2.5;
  stroke-linecap: round;
}
.help {
  position: absolute;
  right: 20px;
  bottom: 20px;
  width: 100px;
  height: 100px;
  border-radius: 50%;
  background: #3f59e4;
  box-shadow: 0 2px 12px rgba(0, 0, 0, 0.2);
}
```
